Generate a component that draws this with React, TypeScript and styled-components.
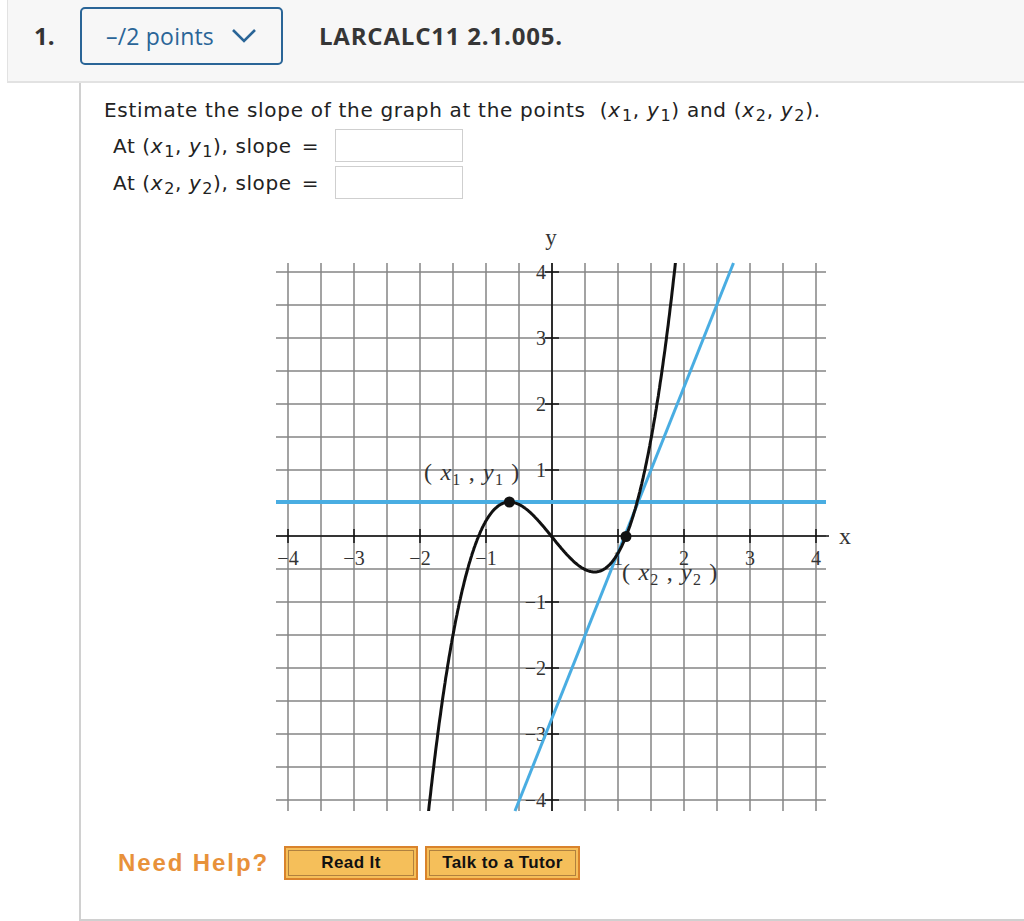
import React from 'react'
import styled, { createGlobalStyle } from 'styled-components'

const GlobalStyle = createGlobalStyle`
  body {
    margin: 0;
    background: #fff;
    font-family: 'DejaVu Sans', Verdana, sans-serif;
    overflow: hidden;
  }
`

const Page = styled.div`
  width: 1024px;
  height: 921px;
  overflow: hidden;
`

const QuestionHeader = styled.div`
  box-sizing: border-box;
  height: 83px;
  margin-left: 7px;
  padding: 7px 0 0 26px;
  display: flex;
  align-items: flex-start;
  background: #f7f7f7;
  border-left: 1px solid #e2e2e2;
  border-bottom: 2px solid #e2e2e2;
  font-family: 'Open Sans', sans-serif;
`

const QuestionNumber = styled.div`
  width: 46px;
  height: 58px;
  line-height: 58px;
  font-size: 24px;
  font-weight: 700;
  color: #333;
`

const PointsButton = styled.button`
  box-sizing: border-box;
  width: 203px;
  height: 58px;
  display: flex;
  align-items: center;
  justify-content: center;
  gap: 17px;
  padding: 0;
  background: transparent;
  border: 2px solid #2a6597;
  border-radius: 5px;
  color: #2a6597;
  font-family: 'Open Sans', sans-serif;
  font-size: 23px;
  letter-spacing: 0.2px;
`

const QuestionTitle = styled.div`
  margin-left: 36px;
  height: 58px;
  line-height: 58px;
  font-size: 24px;
  font-weight: 700;
  letter-spacing: 0.8px;
  color: #363636;
`

const Panel = styled.div`
  box-sizing: border-box;
  height: 838px;
  margin-left: 79px;
  padding: 15px 0 0 23px;
  border-left: 2px solid #d0d0d0;
  border-bottom: 2px solid #d0d0d0;
  color: #222;
`

const Prompt = styled.div`
  height: 24px;
  line-height: 24px;
  font-size: 20px;
  letter-spacing: 0.7px;
  margin-bottom: 5px;
  white-space: nowrap;
`

const AnswerRow = styled.div`
  display: flex;
  align-items: center;
  height: 37px;
  margin-left: 9px;
  font-size: 20px;
  letter-spacing: 0.6px;
`

const AnswerLabel = styled.div`
  width: 222px;
  display: flex;
  justify-content: space-between;
  padding-right: 16px;
  box-sizing: border-box;
  white-space: nowrap;
`

const AnswerBox = styled.input`
  box-sizing: border-box;
  width: 128px;
  height: 33px;
  border: 1px solid #cfcfcf;
  outline: none;
`

const MathVar = styled.i`
  font-style: italic;
  margin-right: 1px;
`

const Sub = styled.sub`
  font-size: 16px;
  vertical-align: -4px;
  line-height: 0;
`

const GraphWrap = styled.div`
  margin: 25px 0 0 156px;
  width: 600px;
  height: 595px;
`

const HelpRow = styled.div`
  display: flex;
  align-items: center;
  height: 34px;
  margin: 25px 0 0 14px;
  font-family: 'Liberation Sans', Arial, sans-serif;
`

const NeedHelp = styled.span`
  width: 166px;
  font-size: 24px;
  font-weight: 700;
  letter-spacing: 1.9px;
  color: #e8913a;
`

const HelpButton = styled.button<{ $w: number }>`
  box-sizing: border-box;
  width: ${p => p.$w}px;
  height: 34px;
  margin-right: 7px;
  background: #f5bf5a;
  border: 2px solid #d9832c;
  box-shadow: inset 0 0 0 2px #f5bf5a, inset 0 0 0 3px #b0813f;
  font-family: 'Liberation Sans', Arial, sans-serif;
  font-size: 17px;
  font-weight: 700;
  letter-spacing: 0.4px;
  color: #111;
  padding: 0;
`

const Pt = ({ n }: { n: number }) => (
  <>
    (<MathVar>x</MathVar>
    <Sub>{n}</Sub>, <MathVar>y</MathVar>
    <Sub>{n}</Sub>)
  </>
)

// graph geometry, in page pixels
const OX = 552
const OY = 535
const U = 66
const TOP = 262
const BOTTOM = 810

const f = (x: number) => 0.988 * (x * x * x - 3 * 0.645 * 0.645 * x) - 0.015

const curvePath = () => {
  const pts: string[] = []
  for (let x = -1.95; x <= 1.95; x += 0.01) {
    const px = OX + x * U
    const py = OY - f(x) * U
    pts.push(`${px.toFixed(1)},${py.toFixed(1)}`)
  }
  return 'M' + pts.join(' L')
}

const label = (t: number) => (t < 0 ? '\u2212' + -t : String(t))

const PointLabel = ({ x, y, n }: { x: number; y: number; n: number }) => (
  <text x={x} y={y} fontSize="24" letterSpacing="1.2" fill="#333">
    ( <tspan fontStyle="italic">x</tspan>
    <tspan fontSize="16" dy="5">{n}</tspan>
    <tspan dy="-5"> , </tspan>
    <tspan fontStyle="italic">y</tspan>
    <tspan fontSize="16" dy="5">{n}</tspan>
    <tspan dy="-5"> )</tspan>
  </text>
)

const Graph = () => {
  const steps = Array.from({ length: 17 }, (_, i) => i - 8)
  const ticks = [-4, -3, -2, -1, 1, 2, 3, 4]
  return (
    <svg width="600" height="595" viewBox="260 225 600 595" fontFamily="'Liberation Serif', 'Times New Roman', serif">
      <defs>
        <clipPath id="plot">
          <rect x="260" y={TOP} width="600" height={BOTTOM - TOP} />
        </clipPath>
      </defs>
      {steps.map(k => (
        <line key={'v' + k} x1={OX + k * 33} x2={OX + k * 33} y1={TOP} y2={BOTTOM} stroke="#858585" strokeWidth="1.5" />
      ))}
      {steps.map(k => (
        <line key={'h' + k} x1={276} x2={826} y1={OY - k * 33} y2={OY - k * 33} stroke="#858585" strokeWidth="1.5" />
      ))}
      <line x1={276} x2={829} y1={OY} y2={OY} stroke="#111" strokeWidth="1.6" />
      <line x1={OX} x2={OX} y1={TOP} y2={BOTTOM} stroke="#111" strokeWidth="1.6" />
      {ticks.map(t => (
        <g key={'t' + t}>
          <line x1={OX + t * U} x2={OX + t * U} y1={OY - 7} y2={OY + 7} stroke="#111" strokeWidth="1.5" />
          <line x1={OX - 7} x2={OX + 7} y1={OY - t * U} y2={OY - t * U} stroke="#111" strokeWidth="1.5" />
        </g>
      ))}
      {ticks.map(t => (
        <text key={'xl' + t} x={OX + t * U} y={OY + 29} fontSize="20" textAnchor="middle" fill="#333">
          {label(t)}
        </text>
      ))}
      {ticks.map(t => (
        <text key={'yl' + t} x={OX - 6} y={OY - t * U + 7} fontSize="20" textAnchor="end" fill="#333">
          {label(t)}
        </text>
      ))}
      <text x={551} y={244} fontSize="23" textAnchor="middle" fill="#333">y</text>
      <text x={845} y={543} fontSize="24" textAnchor="middle" fill="#333">x</text>

      <line x1={276} x2={826} y1={501} y2={501} stroke="#49ade2" strokeWidth="4" />
      <line x1={515} y1={BOTTOM} x2={733.5} y2={TOP} stroke="#49ade2" strokeWidth="3" />
      <path d={curvePath()} fill="none" stroke="#111" strokeWidth="3" clipPath="url(#plot)" />
      <circle cx={509.4} cy={501} r="5.5" fill="#111" />
      <circle cx={626} cy={535.5} r="5.5" fill="#111" />

      <PointLabel x={424} y={479} n={1} />
      <PointLabel x={622} y={579} n={2} />
    </svg>
  )
}

const App = () => (
  <Page>
    <GlobalStyle />
    <QuestionHeader>
      <QuestionNumber>1.</QuestionNumber>
      <PointsButton>
        <span>–/2 points</span>
        <svg width="26" height="16" viewBox="0 0 26 16">
          <polyline points="2,2 13,13 24,2" fill="none" stroke="#2a6597" strokeWidth="2.6" />
        </svg>
      </PointsButton>
      <QuestionTitle>LARCALC11 2.1.005.</QuestionTitle>
    </QuestionHeader>
    <Panel>
      <Prompt>
        Estimate the slope of the graph at the points&nbsp; <Pt n={1} /> and <Pt n={2} />.
      </Prompt>
      <AnswerRow>
        <AnswerLabel>
          <span>
            At <Pt n={1} />, slope
          </span>
          <span>=</span>
        </AnswerLabel>
        <AnswerBox />
      </AnswerRow>
      <AnswerRow>
        <AnswerLabel>
          <span>
            At <Pt n={2} />, slope
          </span>
          <span>=</span>
        </AnswerLabel>
        <AnswerBox />
      </AnswerRow>
      <GraphWrap>
        <Graph />
      </GraphWrap>
      <HelpRow>
        <NeedHelp>Need Help?</NeedHelp>
        <HelpButton $w={134}>Read It</HelpButton>
        <HelpButton $w={155}>Talk to a Tutor</HelpButton>
      </HelpRow>
    </Panel>
  </Page>
)

export default App
